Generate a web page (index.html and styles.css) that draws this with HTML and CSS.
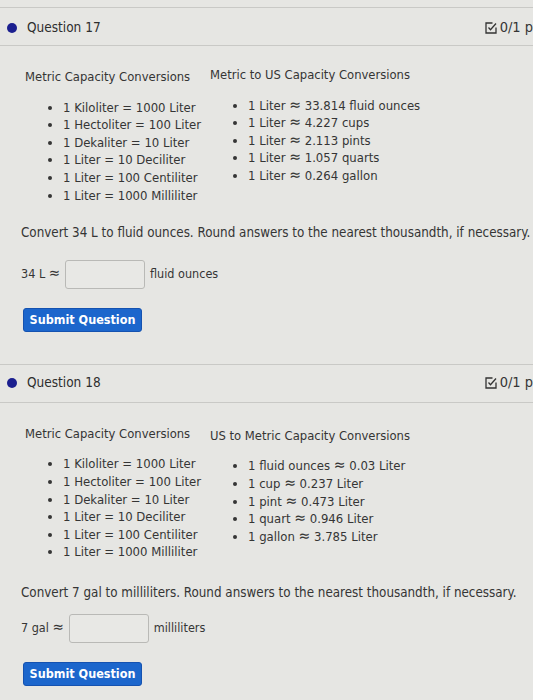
FILE: index.html
```html
<!DOCTYPE html>
<html lang="en">
<head>
  <meta charset="UTF-8">
  <title>Capacity Conversions – Questions 17 and 18</title>
  <link rel="stylesheet" href="styles.css">
</head>
<body>

  <!-- Question 17 -->
  <section class="question q17">
    <div class="question-header">
      <span class="dot"></span>
      <h2 class="question-title">Question 17</h2>
      <span class="score">
        <svg class="check-icon" width="12" height="12" viewBox="0 0 12 12">
          <path d="M7.5 1H1v10h10V5.5" fill="none" stroke="#333" stroke-width="1.3"/>
          <path d="M3.5 5.5l2 2.2L11 1.5" fill="none" stroke="#333" stroke-width="1.3"/>
        </svg>
        0/1 pts
      </span>
    </div>
    <div class="question-body">
      <div class="tables">
        <div class="col col-metric">
          <h3>Metric Capacity Conversions</h3>
          <ul>
            <li>1 Kiloliter = 1000 Liter</li>
            <li>1 Hectoliter = 100 Liter</li>
            <li>1 Dekaliter = 10 Liter</li>
            <li>1 Liter = 10 Deciliter</li>
            <li>1 Liter = 100 Centiliter</li>
            <li>1 Liter = 1000 Milliliter</li>
          </ul>
        </div>
        <div class="col col-us">
          <h3 class="raised">Metric to US Capacity Conversions</h3>
          <ul class="raised">
            <li>1 Liter <span class="approx">&asymp;</span> 33.814 fluid ounces</li>
            <li>1 Liter <span class="approx">&asymp;</span> 4.227 cups</li>
            <li>1 Liter <span class="approx">&asymp;</span> 2.113 pints</li>
            <li>1 Liter <span class="approx">&asymp;</span> 1.057 quarts</li>
            <li>1 Liter <span class="approx">&asymp;</span> 0.264 gallon</li>
          </ul>
        </div>
      </div>
      <p class="prompt">Convert 34 L to fluid ounces. Round answers to the nearest thousandth, if necessary.</p>
      <div class="answer-row">
        <span>34 L <span class="approx">&asymp;</span></span>
        <input class="answer" type="text">
        <span>fluid ounces</span>
      </div>
      <button class="submit">Submit Question</button>
    </div>
  </section>

  <!-- Question 18 -->
  <section class="question q18">
    <div class="question-header">
      <span class="dot"></span>
      <h2 class="question-title">Question 18</h2>
      <span class="score">
        <svg class="check-icon" width="12" height="12" viewBox="0 0 12 12">
          <path d="M7.5 1H1v10h10V5.5" fill="none" stroke="#333" stroke-width="1.3"/>
          <path d="M3.5 5.5l2 2.2L11 1.5" fill="none" stroke="#333" stroke-width="1.3"/>
        </svg>
        0/1 pts
      </span>
    </div>
    <div class="question-body">
      <div class="tables">
        <div class="col col-metric">
          <h3>Metric Capacity Conversions</h3>
          <ul>
            <li>1 Kiloliter = 1000 Liter</li>
            <li>1 Hectoliter = 100 Liter</li>
            <li>1 Dekaliter = 10 Liter</li>
            <li>1 Liter = 10 Deciliter</li>
            <li>1 Liter = 100 Centiliter</li>
            <li>1 Liter = 1000 Milliliter</li>
          </ul>
        </div>
        <div class="col col-us">
          <h3 class="lowered">US to Metric Capacity Conversions</h3>
          <ul class="lowered">
            <li>1 fluid ounces <span class="approx">&asymp;</span> 0.03 Liter</li>
            <li>1 cup <span class="approx">&asymp;</span> 0.237 Liter</li>
            <li>1 pint <span class="approx">&asymp;</span> 0.473 Liter</li>
            <li>1 quart <span class="approx">&asymp;</span> 0.946 Liter</li>
            <li>1 gallon <span class="approx">&asymp;</span> 3.785 Liter</li>
          </ul>
        </div>
      </div>
      <p class="prompt">Convert 7 gal to milliliters. Round answers to the nearest thousandth, if necessary.</p>
      <div class="answer-row">
        <span>7 gal <span class="approx">&asymp;</span></span>
        <input class="answer" type="text">
        <span>milliliters</span>
      </div>
      <button class="submit">Submit Question</button>
    </div>
  </section>

</body>
</html>
```

FILE: styles.css
```css
body {
  margin: 0;
  padding-top: 7px;
  background-color: #e6e6e3;
  color: #353535;
  font-family: "DejaVu Sans Condensed", "DejaVu Sans", sans-serif;
  font-stretch: condensed;
  font-size: 13.3px;
  line-height: 17.6px;
  overflow-x: hidden;
}
.question {
  margin-bottom: 32px;
}
.question-header {
  display: flex;
  align-items: center;
  height: 37px;
  border-top: 1px solid #c9c9c6;
  border-bottom: 1px solid #c9c9c6;
  padding-left: 7px;
}
.q17 .question-header {
  padding-top: 3px;
  height: 34px;
}
.dot {
  width: 10px;
  height: 10px;
  border-radius: 50%;
  background-color: #1b1f8f;
  margin-right: 10px;
}
.question-title {
  margin: 0;
  font-size: 13.5px;
  font-weight: normal;
  color: #2e2e2e;
}
.score {
  margin-left: auto;
  margin-right: -12px;
  display: flex;
  align-items: center;
  gap: 3px;
  white-space: nowrap;
  font-size: 14.5px;
}
.question-body {
  padding: 22px 0 0 21px;
}
.tables {
  display: flex;
}
.col-metric {
  width: 185px;
  padding-left: 4px;
}
h3 {
  margin: 0 0 13px;
  font-size: 12.9px;
  font-weight: normal;
}
ul {
  margin: 0;
  padding-left: 38px;
}
li {
  font-size: 13px;
}
.approx {
  font-family: "DejaVu Sans", sans-serif;
  font-size: 1.2em;
  line-height: 1;
}
.raised {
  position: relative;
  top: -2px;
}
.lowered {
  position: relative;
  top: 2px;
}
.prompt {
  margin: 20px 0 0;
}
.answer-row {
  display: flex;
  align-items: center;
  gap: 5px;
  margin-top: 18px;
  font-size: 12.5px;
}
.answer {
  width: 80px;
  height: 29px;
  box-sizing: border-box;
  border: 1px solid #b9b9b6;
  border-radius: 3px;
  background-color: #e8e8e5;
  margin: 0;
}
.submit {
  display: block;
  margin: 19px 0 0 2px;
  width: 119px;
  height: 24px;
  padding: 0;
  border: 1px solid #1552b0;
  border-radius: 3px;
  background-color: #1c66cc;
  color: #fff;
  font-family: inherit;
  font-stretch: condensed;
  font-size: 12.5px;
  font-weight: bold;
  white-space: nowrap;
}
.q18 .prompt {
  margin-top: 23px;
}
.q18 .answer-row {
  margin-top: 12px;
}
```
